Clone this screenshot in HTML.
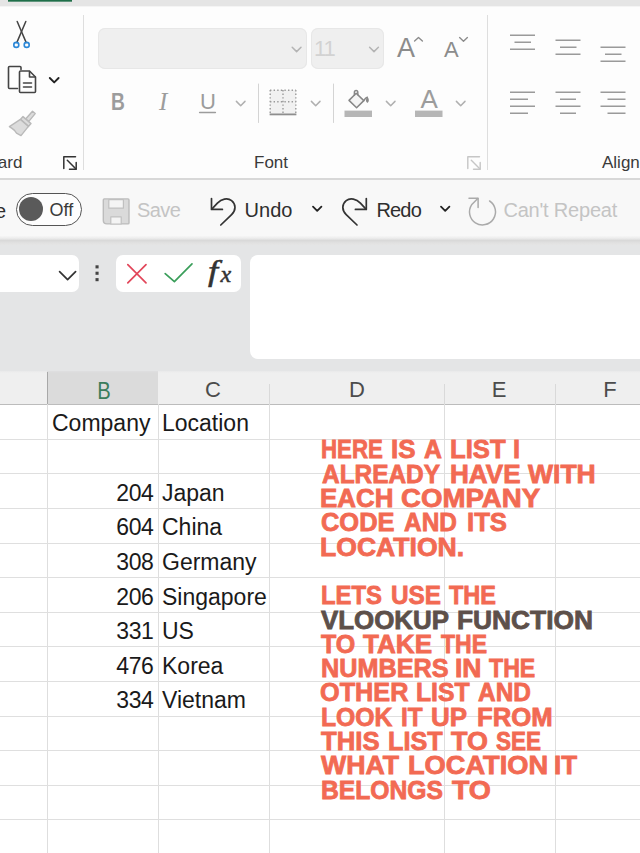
<!DOCTYPE html>
<html lang="en">
<head>
<meta charset="utf-8">
<title>Excel VLOOKUP</title>
<style>
html,body{margin:0;padding:0;}
body{width:640px;height:853px;overflow:hidden;background:#fff;font-family:"Liberation Sans",sans-serif;}
#root{position:relative;width:640px;height:853px;overflow:hidden;background:#fff;}
.abs{position:absolute;}
#topband{left:0;top:0;width:640px;height:7px;background:linear-gradient(#e5e5e5 0,#e5e5e5 5.5px,#f4f4f4 6.5px,#fdfdfd 7px);}
#greenbar{left:8px;top:0;width:64px;height:2px;background:linear-gradient(#1f6f49 0,#1f6f49 1px,rgba(31,111,73,.35) 2px);}
#ribbon{left:0;top:7px;width:640px;height:171px;background:#fdfdfd;}
#ribline{left:0;top:178px;width:640px;height:2px;background:#d8d8d8;}
#qat{left:0;top:180px;width:640px;height:58px;background:#f8f8f8;}
#qatshadow{left:0;top:236px;width:640px;height:9px;background:linear-gradient(#f6f6f6,#ececec 25%,#d9d9d9 50%,#e0e0e0 75%,#e5e5e5);}
#fbar{left:0;top:245px;width:640px;height:126px;background:#e4e5e6;}
#colhead{left:0;top:371px;width:640px;height:33px;background:linear-gradient(#e9e9ea 0,#efefef 2px);}
.vsep{width:1px;background:#dedede;}
.lbl{font-size:17px;color:#3a3a3a;white-space:nowrap;line-height:20px;}
.qtxt{font-size:20px;color:#2e2e2e;white-space:nowrap;line-height:24px;}
.dis{color:#c4c4c4;}
svg{position:absolute;overflow:visible;}
.colL{font-size:22px;color:#4c4c4c;line-height:24px;text-align:center;width:30px;}
.gridv{width:1px;background:#dedede;top:404px;height:449px;}
.gridh{height:1px;background:#dfdfdf;left:0;width:640px;}
.cell{font-size:23px;line-height:26px;color:#1a1a1a;white-space:nowrap;}
.num{text-align:right;width:100.5px;letter-spacing:-0.4px;}
.ow{position:absolute;font-weight:bold;font-size:25.5px;line-height:24px;color:#f26a53;white-space:nowrap;transform-origin:0 0;-webkit-text-stroke:0.8px #f26a53;}
.ow.dk{color:#5d504a;-webkit-text-stroke:0.8px #5d504a;}
</style>
</head>
<body>
<div id="root">
<!-- backgrounds -->
<div id="topband" class="abs"></div>
<div id="greenbar" class="abs"></div>
<div id="ribbon" class="abs"></div>
<div id="ribline" class="abs"></div>
<div id="qat" class="abs"></div>
<div id="qatshadow" class="abs"></div>
<div id="fbar" class="abs"></div>
<div id="colhead" class="abs"></div>

<!-- RIBBON -->
<div id="rib-content">
<div class="abs vsep" style="left:83px;top:15px;height:155px;"></div>
<div class="abs vsep" style="left:487px;top:15px;height:155px;"></div>
<div class="abs lbl" style="right:617.6px;top:152.5px;">Clipboard</div>
<div class="abs lbl" style="left:254px;top:152.5px;">Font</div>
<div class="abs lbl" style="left:602px;top:153px;">Alignment</div>
<!-- font name box / size box -->
<div class="abs" style="left:98px;top:28px;width:209px;height:41px;background:#efefef;border-radius:7px;box-shadow:inset 0 0 0 1px #e7e7e7;"></div>
<div class="abs" style="left:311px;top:28px;width:73px;height:41px;background:#efefef;border-radius:7px;box-shadow:inset 0 0 0 1px #e7e7e7;"></div>
<div class="abs" style="left:314px;top:36.5px;font-size:22px;line-height:24px;color:#d2d2d2;letter-spacing:-1px;">11</div>
<!-- glyph buttons -->
<div class="abs" id="gB" style="left:111.2px;top:88px;font-size:24px;line-height:28px;font-weight:bold;color:#9c9c9c;transform-origin:0 0;transform:scaleX(0.8);">B</div>
<div class="abs" id="gI" style="left:159px;top:88px;font-family:'Liberation Serif',serif;font-style:italic;font-size:25px;line-height:28px;color:#9c9c9c;">I</div>
<div class="abs" id="gU" style="left:200px;top:88px;font-size:22px;line-height:28px;color:#9c9c9c;">U</div>
<div class="abs" id="gA1" style="left:397px;top:33px;font-size:27px;line-height:30px;color:#8c8c8c;">A</div>
<div class="abs" id="gA2" style="left:444px;top:37px;font-size:22px;line-height:26px;color:#8c8c8c;">A</div>
<div class="abs" id="gA3" style="left:420.5px;top:84px;font-size:26px;line-height:30px;color:#9c9c9c;">A</div>
</div>

<!-- QAT -->
<div id="qat-content">
<div class="abs qtxt" style="right:633.8px;top:198.5px;">AutoSave</div>
<div class="abs" style="left:16px;top:192.6px;width:63.5px;height:31.4px;border:1.5px solid #555;border-radius:18px;background:#fdfdfd;"></div>
<div class="abs" style="left:19px;top:196.6px;width:24.4px;height:24.4px;border-radius:50%;background:#5a5a5a;"></div>
<div class="abs" style="left:49.5px;top:198.8px;font-size:18px;line-height:22px;color:#3a3a3a;">Off</div>
<div class="abs qtxt dis" style="left:137px;top:198px;letter-spacing:-0.6px;">Save</div>
<div class="abs qtxt" style="left:244.6px;top:198px;">Undo</div>
<div class="abs qtxt" style="left:376.4px;top:198px;letter-spacing:-0.8px;">Redo</div>
<div class="abs qtxt dis" style="left:503.4px;top:198px;letter-spacing:-0.2px;">Can't Repeat</div>
</div>

<!-- FORMULA BAR -->
<div id="fbar-content">
<div class="abs" style="left:-10px;top:255px;width:89px;height:37px;background:#fff;border-radius:7px;"></div>
<div class="abs" style="left:116px;top:255px;width:124.5px;height:37px;background:#fff;border-radius:7px;"></div>
<div class="abs" style="left:250px;top:255px;width:400px;height:104px;background:#fff;border-radius:8px;"></div>
<div class="abs" id="fxbox" style="left:206px;top:250px;width:32px;height:42px;"><span class="abs" id="fxf" style="left:2.2px;top:3.6px;font-family:'Liberation Serif',serif;font-style:italic;font-size:29px;line-height:34px;color:#333;-webkit-text-stroke:0.5px #333;transform-origin:0 0;transform:scaleX(1.25);">f</span><span class="abs" id="fxx" style="left:14.5px;top:10.4px;font-family:'Liberation Serif',serif;font-style:italic;font-size:24px;line-height:28px;color:#333;-webkit-text-stroke:0.5px #333;">x</span></div>
</div>

<!-- COLUMN HEADERS -->
<div id="heads">
<div class="abs" style="left:47px;top:371px;width:111px;height:33px;background:linear-gradient(#dfdfe0 0,#dbdbdb 2px);"></div>
<div class="abs" style="left:47px;top:372px;width:1px;height:32px;background:#a8a8a8;"></div>
<div class="abs" style="left:0;top:404px;width:640px;height:1px;background:#bcbcbc;"></div>
<div class="abs colL" style="left:88.5px;top:378.5px;color:#3b7d5c;font-size:23px;transform:scaleX(0.88);">B</div>
<div class="abs colL" style="left:198px;top:378px;">C</div>
<div class="abs colL" style="left:342px;top:378px;">D</div>
<div class="abs colL" style="left:484px;top:378px;">E</div>
<div class="abs colL" style="left:595px;top:378px;">F</div>
</div>

<!-- GRID -->
<div id="grid">
<div class="abs gridv" style="left:47px;top:404px;height:449px;"></div>
<div class="abs gridv" style="left:158px;top:404px;height:449px;"></div>
<div class="abs gridv" style="left:269px;top:404px;height:449px;"></div><div class="abs" style="left:269px;top:384px;width:1px;height:20px;background:#d9d9d9;"></div>
<div class="abs gridv" style="left:444px;top:404px;height:449px;"></div><div class="abs" style="left:444px;top:384px;width:1px;height:20px;background:#d9d9d9;"></div>
<div class="abs gridv" style="left:555px;top:404px;height:449px;"></div><div class="abs" style="left:555px;top:384px;width:1px;height:20px;background:#d9d9d9;"></div>
<div class="abs gridh" style="top:439px;"></div>
<div class="abs gridh" style="top:473px;"></div>
<div class="abs gridh" style="top:508px;"></div>
<div class="abs gridh" style="top:543px;"></div>
<div class="abs gridh" style="top:577px;"></div>
<div class="abs gridh" style="top:612px;"></div>
<div class="abs gridh" style="top:646px;"></div>
<div class="abs gridh" style="top:681px;"></div>
<div class="abs gridh" style="top:716px;"></div>
<div class="abs gridh" style="top:750px;"></div>
<div class="abs gridh" style="top:785px;"></div>
<div class="abs gridh" style="top:819px;"></div>

<div class="abs cell" style="left:52px;top:410px;">Company</div>
<div class="abs cell" style="left:162px;top:410px;">Location</div>
<div class="abs cell num" style="left:53px;top:480px;">204</div><div class="abs cell" style="left:162px;top:480px;">Japan</div>
<div class="abs cell num" style="left:53px;top:514px;">604</div><div class="abs cell" style="left:162px;top:514px;">China</div>
<div class="abs cell num" style="left:53px;top:549px;">308</div><div class="abs cell" style="left:162px;top:549px;">Germany</div>
<div class="abs cell num" style="left:53px;top:584px;">206</div><div class="abs cell" style="left:162px;top:584px;">Singapore</div>
<div class="abs cell num" style="left:53px;top:618px;">331</div><div class="abs cell" style="left:162px;top:618px;">US</div>
<div class="abs cell num" style="left:53px;top:653px;">476</div><div class="abs cell" style="left:162px;top:653px;">Korea</div>
<div class="abs cell num" style="left:53px;top:687px;">334</div><div class="abs cell" style="left:162px;top:687px;">Vietnam</div>
</div>

<!-- ICONS (single page-sized svg in page coordinates) -->
<svg id="icons" width="640" height="853" viewBox="0 0 640 853" style="left:0;top:0;" fill="none" stroke-linecap="round" stroke-linejoin="round">
<!-- scissors -->
<g stroke="#444" stroke-width="1.5">
<path d="M17.2 21.5 L26.2 42.6"/><path d="M25.8 21.5 L16.8 42.6"/>
</g>
<g stroke="#2b88d8" stroke-width="1.6"><circle cx="16.3" cy="44.9" r="2.5"/><circle cx="26.7" cy="44.9" r="2.5"/></g>
<!-- copy -->
<g stroke="#444" stroke-width="1.6">
<path d="M21 69.5 V67.5 Q21 66.5 20 66.5 H9.5 Q8.5 66.5 8.5 67.5 V87.5 Q8.5 88.5 9.5 88.5 H17.5"/>
<path d="M20.5 71 H29.5 L35.5 77 V91.5 Q35.5 92.5 34.5 92.5 H20.5 Q19.5 92.5 19.5 91.5 V72 Q19.5 71 20.5 71 Z"/>
<path d="M29.5 71.5 V77 H35"/>
<path d="M23.5 83 H31.5 M23.5 87 H31.5"/>
</g>
<path d="M49.8 78 L54.2 82.4 L58.6 78" stroke="#222" stroke-width="1.9"/>
<!-- format painter (disabled) -->
<g stroke="#b9b9b9" stroke-width="1.4" fill="#dcdcdc">
<path d="M32.5 111.2 L35.2 113.6 L28.6 121.6 L25.6 119 Z"/>
<path d="M23 116.6 L31 123.6 L28.4 126.4 L20.4 119.4 Z"/>
<path d="M20.4 119.4 L28.4 126.4 L21 135.6 L16.5 133.2 L14.5 130.4 L12 128.4 L9.4 126.6 Z"/>
</g>
<!-- dialog launcher clipboard -->
<g stroke="#333" stroke-width="1.5">
<path d="M63.8 168.5 V156.8 H75.5"/><path d="M67.3 160.3 L76 169"/><path d="M76.2 162.5 V169.2 H69.5"/>
</g>
<!-- dialog launcher font (disabled) -->
<g stroke="#c6c6c6" stroke-width="1.4">
<path d="M467.8 168.5 V156.8 H479.5"/><path d="M471.3 160.3 L480 169"/><path d="M480.2 162.5 V169.2 H473.5"/>
</g>
<!-- font box chevrons -->
<path d="M292.2 47.2 L296.6 51.6 L301 47.2" stroke="#b4b4b4" stroke-width="1.5"/>
<path d="M369.6 47.2 L374 51.6 L378.4 47.2" stroke="#b4b4b4" stroke-width="1.5"/>
<!-- grow / shrink carets -->
<path d="M414.6 41 L418.5 37.4 L422.4 41" stroke="#8c8c8c" stroke-width="1.4"/>
<path d="M459.6 37.6 L463.5 41.2 L467.4 37.6" stroke="#8c8c8c" stroke-width="1.4"/>
<!-- underline of U -->
<path d="M199.6 112.4 H215.4" stroke="#9c9c9c" stroke-width="1.5"/>
<!-- row2 chevrons -->
<g stroke="#b0b0b0" stroke-width="1.5">
<path d="M236.4 101.4 L240.7 105.7 L245 101.4"/>
<path d="M311.4 101.4 L315.7 105.7 L320 101.4"/>
<path d="M386.4 101.4 L390.7 105.7 L395 101.4"/>
<path d="M456.4 101.4 L460.7 105.7 L465 101.4"/>
</g>
<!-- row2 separators -->
<path d="M258.5 84 V122.5 M333.5 84 V122.5" stroke="#d4d4d4" stroke-width="1"/>
<!-- border icon -->
<rect x="270" y="90" width="26" height="24" fill="#f1f1f1" stroke="none"/>
<g stroke="#9a9a9a" stroke-width="1.4" stroke-dasharray="1.4 2.2" stroke-linecap="butt">
<path d="M270 90.2 H296 M270.2 90 V113 M295.8 90 V113 M283 90 V113 M270 101.8 H296"/>
</g>
<path d="M269.6 114.4 H296.4" stroke="#8e8e8e" stroke-width="1.8" stroke-linecap="butt"/>
<!-- fill bucket -->
<g stroke="#868686" stroke-width="1.5">
<path d="M356.2 93.2 L363.8 100.6 L356.6 107.8 L349 100.4 Z" fill="#f4f4f4"/>
<path d="M354.4 95.2 V92.2 Q354.4 90.4 356.1 90.4 Q357.8 90.4 357.8 92.2 V94.8"/>
<path d="M363.8 100.6 Q365.4 97.6 367.2 97.2"/>
</g>
<path d="M367.4 96.6 q-3 4.2 0 6.4 q3 -2.2 0 -6.4z" fill="#8a8a8a" stroke="none"/>
<rect x="344.5" y="110.6" width="27.5" height="6.4" fill="#b6b6b6" stroke="none"/>
<rect x="415" y="110.6" width="27.5" height="6.4" fill="#b6b6b6" stroke="none"/>
<!-- alignment icons -->
<g stroke="#9a9a9a" stroke-width="1.5" stroke-linecap="butt">
<path d="M510 35.2 H535 M514.5 42.2 H531 M510 49.2 H535"/>
<path d="M555.5 40.2 H580.5 M560 47.2 H576.5 M555.5 54.2 H580.5"/>
<path d="M600.5 47.2 H625.5 M605 54.2 H621.5 M600.5 61.2 H625.5"/>
<path d="M510 92.2 H535 M510 99.2 H528 M510 106.2 H535 M510 113.2 H528"/>
<path d="M555.5 92.2 H580.5 M560 99.2 H576 M555.5 106.2 H580.5 M560 113.2 H576"/>
<path d="M600.5 92.2 H625.5 M607.5 99.2 H625.5 M600.5 106.2 H625.5 M607.5 113.2 H625.5"/>
</g>
<!-- QAT: save icon (disabled) -->
<path d="M104.3 198.9 H128 Q129 198.9 129 199.9 V222.9 Q129 223.9 128 223.9 H107 Q103.3 223.9 103.3 220.2 V199.9 Q103.3 198.9 104.3 198.9 Z" fill="#dadada" stroke="#bcbcbc" stroke-width="1.4"/>
<rect x="108.8" y="199.6" width="14.6" height="8.6" fill="#f4f4f4" stroke="#c0c0c0" stroke-width="1.2"/>
<rect x="110.8" y="216.8" width="10.4" height="7.2" fill="#f4f4f4" stroke="#c0c0c0" stroke-width="1.2"/>
<!-- undo -->
<g stroke="#333" stroke-width="1.7">
<path d="M211.5 198.6 V209.4 H222.4"/>
<path d="M211.8 209.1 L217.4 203.2 C221.4 199 227.4 197.2 231.6 200.6 C236.2 204.4 236 210.2 231.6 214.6 L220.8 225"/>
</g>
<!-- redo -->
<g stroke="#333" stroke-width="1.7">
<path d="M366.3 198.6 V209.4 H355.4"/>
<path d="M366 209.1 L360.4 203.2 C356.4 199 350.4 197.2 346.2 200.6 C341.6 204.4 341.8 210.2 346.2 214.6 L357 225"/>
</g>
<g stroke="#222" stroke-width="1.8">
<path d="M313 206.6 L317.2 210.8 L321.4 206.6"/>
<path d="M441 206.6 L445.2 210.8 L449.4 206.6"/>
</g>
<!-- repeat (disabled) -->
<g stroke="#aaaaaa" stroke-width="1.5">
<path d="M469 198.2 H478.1 V207.4"/>
<path d="M477.8 198.5 L471.6 204.8 A13 13 0 1 0 489.6 201"/>
</g>
<!-- name box chevron -->
<path d="M59.6 271.6 L67.6 279.6 L75.6 271.6" stroke="#333" stroke-width="1.7"/>
<!-- dots -->
<g fill="#444" stroke="none"><rect x="95.5" y="265.3" width="3.1" height="3.1"/><rect x="95.5" y="271.7" width="3.1" height="3.1"/><rect x="95.5" y="278.1" width="3.1" height="3.1"/></g>
<!-- cancel / enter -->
<path d="M127.8 264.6 L146 282.8 M146 264.6 L127.8 282.8" stroke="#e2465a" stroke-width="1.7"/>
<path d="M165.2 273.6 L174.4 281.6 L192 263.8" stroke="#3a9e5a" stroke-width="1.7"/>
</svg>

<!-- OVERLAY TEXT -->
<div id="overlay" style="position:absolute;left:0.5px;top:0;">
<span class="ow" style="left:320.13px;top:437.46px;transform:scaleX(0.8734)">HERE</span>
<span class="ow" style="left:390.48px;top:437.46px;transform:scaleX(1.0180)">IS</span>
<span class="ow" style="left:423.50px;top:437.46px;transform:scaleX(0.9722)">A</span>
<span class="ow" style="left:449.99px;top:437.46px;transform:scaleX(1.0060)">LIST</span>
<span class="ow" style="left:512.50px;top:437.46px;transform:scaleX(1.0000)">I</span>
<span class="ow" style="left:321.00px;top:461.76px;transform:scaleX(0.9574)">ALREADY</span>
<span class="ow" style="left:449.48px;top:461.76px;transform:scaleX(1.0229)">HAVE</span>
<span class="ow" style="left:527.50px;top:461.76px;transform:scaleX(1.0396)">WITH</span>
<span class="ow" style="left:319.98px;top:486.06px;transform:scaleX(1.0166)">EACH</span>
<span class="ow" style="left:400.92px;top:486.06px;transform:scaleX(1.0829)">COMPANY</span>
<span class="ow" style="left:320.00px;top:510.36px;transform:scaleX(0.9977)">CODE</span>
<span class="ow" style="left:403.50px;top:510.36px;transform:scaleX(0.9575)">AND</span>
<span class="ow" style="left:466.49px;top:510.36px;transform:scaleX(1.0088)">ITS</span>
<span class="ow" style="left:319.96px;top:534.66px;transform:scaleX(1.0421)">LOCATION.</span>
<span class="ow" style="left:320.06px;top:583.26px;transform:scaleX(0.9351)">LETS</span>
<span class="ow" style="left:390.05px;top:583.26px;transform:scaleX(0.9529)">USE</span>
<span class="ow" style="left:448.00px;top:583.26px;transform:scaleX(0.9217)">THE</span>
<span class="ow dk" style="left:320.00px;top:607.56px;transform:scaleX(1.0152)">VLOOKUP</span>
<span class="ow dk" style="left:456.47px;top:607.56px;transform:scaleX(1.0323)">FUNCTION</span>
<span class="ow" style="left:320.00px;top:631.86px;transform:scaleX(0.9820)">TO</span>
<span class="ow" style="left:362.00px;top:631.86px;transform:scaleX(1.0220)">TAKE</span>
<span class="ow" style="left:440.00px;top:631.86px;transform:scaleX(0.9021)">THE</span>
<span class="ow" style="left:320.01px;top:656.16px;transform:scaleX(0.9890)">NUMBERS</span>
<span class="ow" style="left:454.96px;top:656.16px;transform:scaleX(1.0396)">IN</span>
<span class="ow" style="left:488.75px;top:656.16px;transform:scaleX(0.9070)">THE</span>
<span class="ow" style="left:319.01px;top:680.46px;transform:scaleX(0.9905)">OTHER</span>
<span class="ow" style="left:415.03px;top:680.46px;transform:scaleX(0.9695)">LIST</span>
<span class="ow" style="left:477.50px;top:680.46px;transform:scaleX(0.9575)">AND</span>
<span class="ow" style="left:320.03px;top:704.76px;transform:scaleX(0.9693)">LOOK</span>
<span class="ow" style="left:400.05px;top:704.76px;transform:scaleX(0.9509)">IT</span>
<span class="ow" style="left:430.98px;top:704.76px;transform:scaleX(1.0170)">UP</span>
<span class="ow" style="left:476.49px;top:704.76px;transform:scaleX(1.0092)">FROM</span>
<span class="ow" style="left:320.00px;top:729.06px;transform:scaleX(1.0073)">THIS</span>
<span class="ow" style="left:387.51px;top:729.06px;transform:scaleX(0.9878)">LIST</span>
<span class="ow" style="left:450.00px;top:729.06px;transform:scaleX(1.0552)">TO</span>
<span class="ow" style="left:495.00px;top:729.06px;transform:scaleX(0.8821)">SEE</span>
<span class="ow" style="left:320.00px;top:753.36px;transform:scaleX(1.0466)">WHAT</span>
<span class="ow" style="left:407.43px;top:753.36px;transform:scaleX(1.0672)">LOCATION</span>
<span class="ow" style="left:553.98px;top:753.36px;transform:scaleX(1.0188)">IT</span>
<span class="ow" style="left:320.03px;top:777.66px;transform:scaleX(0.9673)">BELONGS</span>
<span class="ow" style="left:451.00px;top:777.66px;transform:scaleX(1.1139)">TO</span>
</div>

</div>
</body>
</html>
